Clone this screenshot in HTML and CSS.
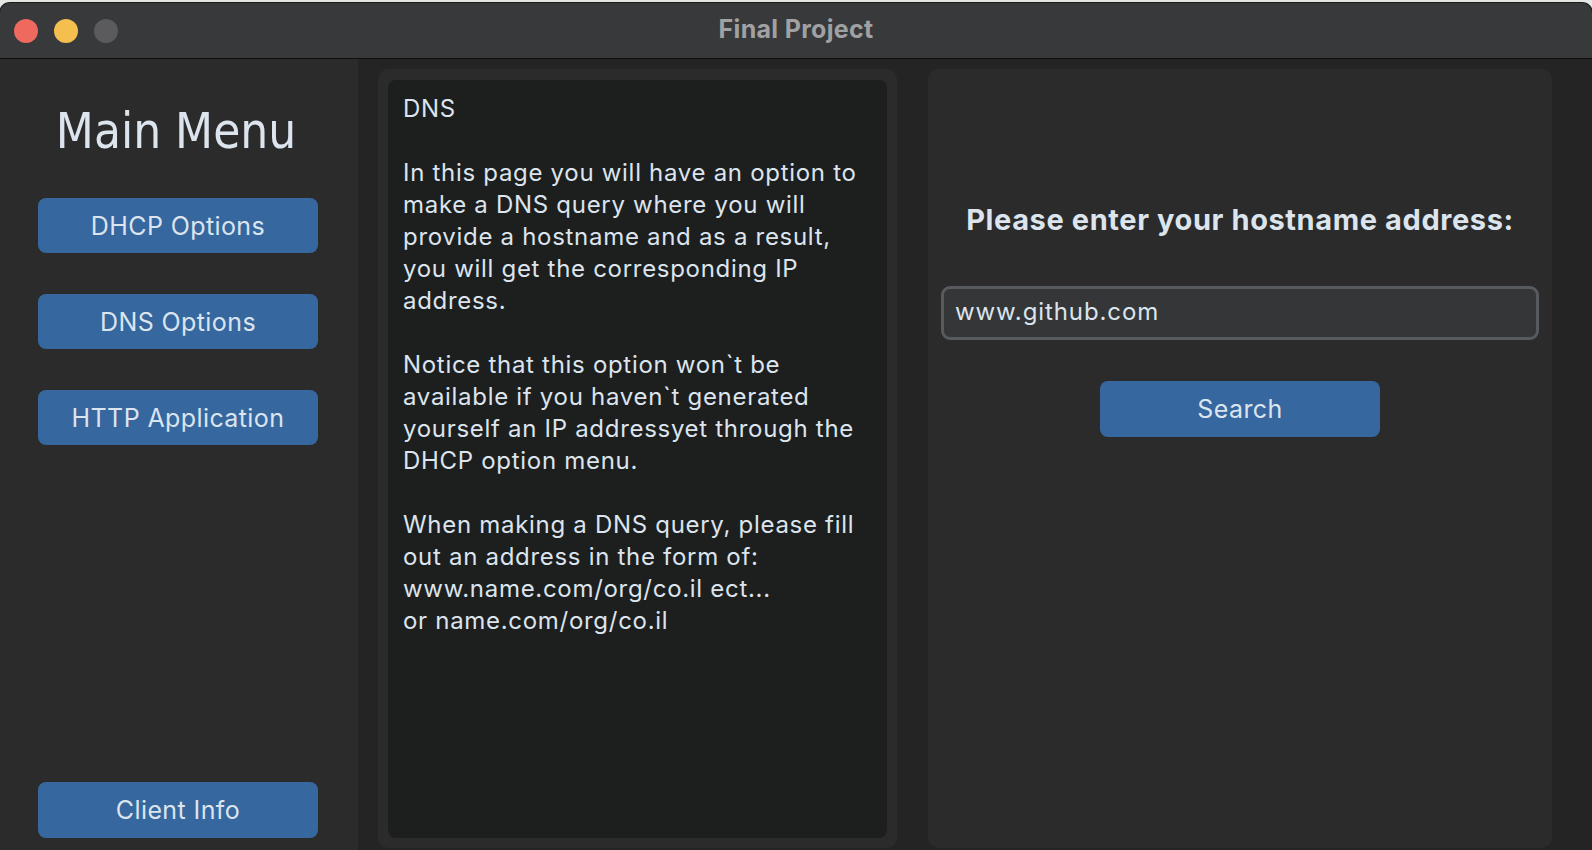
FILE: index.html
```html
<!doctype html>
<html lang="en">
	<head>
		<meta charset="UTF-8">
		<title>Final Project</title>
		<link rel="stylesheet" href="styles.css">
	</head>
	<body>
		<div class="window">
			<div class="titlebar">
				<div class="lights">
					<span class="light red"></span>
					<span class="light yellow"></span>
					<span class="light off"></span>
				</div>
				<div class="title">Final Project</div>
				<div></div>
			</div>
			<div class="content">
				<div class="sidebar">
					<div class="menu-title">Main Menu</div>
					<button class="btn side-btn first">DHCP Options</button>
					<button class="btn side-btn">DNS Options</button>
					<button class="btn side-btn">HTTP Application</button>
					<button class="btn side-btn bottom">Client Info</button>
				</div>
				<div class="main">
					<div class="info-frame">
						<div class="info-text">DNS

In this page you will have an option to
make a DNS query where you will
provide a hostname and as a result,
you will get the corresponding IP
address.

Notice that this option won`t be
available if you haven`t generated
yourself an IP addressyet through the
DHCP option menu.

When making a DNS query, please fill
out an address in the form of:
www.name.com/org/co.il ect...
or name.com/org/co.il</div>
					</div>
					<div class="query-panel">
						<div class="query-label">Please enter your hostname address:</div>
						<input type="text" class="host-input" value="www.github.com">
						<button class="btn search-btn">Search</button>
					</div>
				</div>
			</div>
		</div>
	</body>
</html>
```

FILE: styles.css
```css
*{margin:0;padding:0;box-sizing:border-box;}
body{
	background:#e4e6e4;
	font-family:Inter,"Liberation Sans",sans-serif;
	color:#dce4ee;
	height:850px;
	overflow:hidden;
}
.window{
	margin-top:3px;
	height:847px;
	background:#242424;
	border-radius:10px 10px 0 0;
	box-shadow:0 0 0 1px #1a1a1a;
	overflow:hidden;
	display:flex;
	flex-direction:column;
}
.titlebar{
	height:56px;
	background:#38393b;
	border-bottom:1px solid #0e0e0e;
	display:grid;
	grid-template-columns:1fr auto 1fr;
	align-items:center;
}
.lights{
	display:flex;
	gap:16px;
	padding-left:14px;
}
.light{
	width:24px;height:24px;
	border-radius:50%;
	display:block;
}
.red{background:#ee6a5f;}
.yellow{background:#f5bf4f;}
.off{background:#5b5b5e;}
.title{
	font-size:25px;
	font-weight:700;
	letter-spacing:0.3px;
	color:#a0a1a3;
	padding-bottom:3px;
}
.content{
	flex:1;
	display:flex;
	min-height:0;
}
.sidebar{
	width:358px;
	background:#2b2b2b;
	display:flex;
	flex-direction:column;
	padding:43px 0 12px 38px;
}
.menu-title{
	width:276px;
	text-align:center;
	font-family:"DejaVu Sans Condensed","DejaVu Sans",sans-serif;
	font-size:49px;
	line-height:60px;
	color:#dce4ee;
}
.btn{
	border:0;
	border-radius:8px;
	background:#36679f;
	color:#dce4ee;
	font-family:Inter,"Liberation Sans",sans-serif;
	font-size:25px;
	letter-spacing:0.4px;
	cursor:pointer;
}
.side-btn{
	width:280px;height:55px;
	margin-top:41px;
}
.side-btn.first{margin-top:36px;}
.side-btn.bottom{margin-top:auto;height:56px;}
.main{
	flex:1;
	display:grid;
	grid-template-columns:519px 624px;
	gap:31px;
	padding:10px 40px 2px 20px;
}
.info-frame{
	background:#2b2b2b;
	border-radius:10px;
	padding:11px 10px 10px 10px;
}
.info-text{
	height:100%;
	background:#1d1e1e;
	border-radius:8px;
	padding:13px 15px;
	white-space:pre;
	font-size:24px;
	line-height:32px;
	letter-spacing:0.7px;
	color:#dce4ee;
}
.query-panel{
	background:#2b2b2b;
	border-radius:10px;
	display:flex;
	flex-direction:column;
	align-items:center;
	padding:133px 13px 0 13px;
}
.query-label{
	font-size:29px;
	font-weight:700;
	line-height:36px;
	letter-spacing:0.6px;
}
.host-input{
	width:100%;height:54px;
	margin-top:48px;
	background:#343638;
	border:3px solid #575b5f;
	border-radius:9px;
	padding:0 11px 4px 11px;
	font-family:Inter,"Liberation Sans",sans-serif;
	font-size:24px;
	letter-spacing:0.9px;
	color:#dce4ee;
	outline:none;
}
.search-btn{
	width:280px;height:56px;
	margin-top:41px;
}
```
